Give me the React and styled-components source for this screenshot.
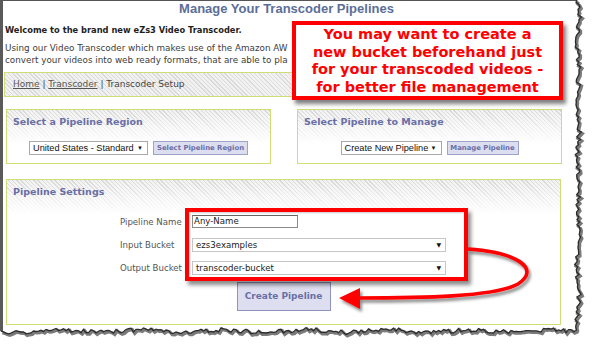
import React from 'react'
import styled, { createGlobalStyle } from 'styled-components'

const GlobalStyle = createGlobalStyle`
  html, body {
    margin: 0;
    padding: 0;
    background: #fff;
  }
  body {
    font-family: "DejaVu Sans", Verdana, sans-serif;
  }
`

// simple seeded noise so the torn edge is the same every render
function makeRand(seed) {
  let s = seed
  return () => {
    s = (s * 16807) % 2147483647
    return (s - 1) / 2147483646
  }
}

function tornEdgePath() {
  const rand = makeRand(42)
  const pts = []
  for (let y = 2; y <= 330; y += 2.5) {
    const x = 578 + Math.sin(y / 9) * 1.2 + (rand() - 0.5) * 4.5
    pts.push([x, y])
  }
  for (let x = 576; x >= 0; x -= 2.5) {
    const y = 331 + Math.sin(x / 13) * 1.3 + (rand() - 0.5) * 4.5
    pts.push([x, y])
  }
  return 'M577 0 ' + pts.map(p => `L${p[0].toFixed(1)} ${p[1].toFixed(1)}`).join(' ')
}

const edge = tornEdgePath()

function App() {
  return (
    <Page>
      <GlobalStyle />
      <Paper>
        <Title>Manage Your Transcoder Pipelines</Title>
        <Welcome>Welcome to the brand new eZs3 Video Transcoder.</Welcome>
        {/* only the part left of the callout is visible in the screenshot */}
        <Intro>
          <div>Using our Video Transcoder which makes use of the Amazon AW</div>
          <div>convert your videos into web ready formats, that are able to pla</div>
        </Intro>
        <Crumbs>
          <a href='#'>Home</a> | <a href='#'>Transcoder</a> | Transcoder Setup
        </Crumbs>
        <Row>
          <Box>
            <BoxTitle>Select a Pipeline Region</BoxTitle>
            <Controls>
              <FakeSelect width={119}>United States - Standard<Caret>▼</Caret></FakeSelect>
              <SmallButton width={95}>Select Pipeline Region</SmallButton>
            </Controls>
          </Box>
          <Box>
            <BoxTitle>Select Pipeline to Manage</BoxTitle>
            <Controls>
              <FakeSelect width={101}>Create New Pipeline<Caret>▼</Caret></FakeSelect>
              <SmallButton width={72}>Manage Pipeline</SmallButton>
            </Controls>
          </Box>
        </Row>
        <Settings>
          <BoxTitle>Pipeline Settings</BoxTitle>
          <Form>
            <Label>Pipeline Name</Label>
            <TextInput>Any-Name</TextInput>
            <Label>Input Bucket</Label>
            <BucketSelect>ezs3examples<Caret>▼</Caret></BucketSelect>
            <Label>Output Bucket</Label>
            <BucketSelect>transcoder-bucket<Caret>▼</Caret></BucketSelect>
          </Form>
          <BigButton>Create Pipeline</BigButton>
        </Settings>
      </Paper>

      <Callout>
        You may want to create a<br />
        new bucket beforehand just<br />
        for your transcoded videos -<br />
        for better file management
      </Callout>
      <RedFrame />

      <Overlay width='600' height='351' viewBox='0 0 600 351'>
        <defs>
          <filter id='sh' x='-10%' y='-10%' width='130%' height='130%'>
            <feDropShadow dx='2' dy='3' stdDeviation='1.6' floodColor='#000' floodOpacity='0.45' />
          </filter>
        </defs>
        <g filter='url(#sh)'>
          <path d='M468 249 C 515 252, 542 268, 518 284 C 495 297, 420 298, 357 298'
            fill='none' stroke='#f00' strokeWidth='3.6' />
          <polygon points='339,298 360,288 360,309' fill='#f00' />
        </g>
        <path d={edge + ' L0 331 L0 351 L600 351 L600 0 Z'} fill='#fff' />
        <path d={edge} fill='none' stroke='#7a7a7a' strokeWidth='3.2' transform='translate(1.3 1.5)' />
        <path d={edge} fill='none' stroke='#2b2b2b' strokeWidth='1.3' />
      </Overlay>
    </Page>
  )
}

export default App

const Page = styled.div`
    position: relative;
    width: 600px;
    height: 351px;
    overflow: hidden;
    background: #fff;
`

const Paper = styled.div`
    width: 578px;
    height: 333px;
    box-sizing: border-box;
    border-left: 3px solid #5a5a5a;
    border-top: 1px solid #555;
    background: #fff;
    overflow: hidden;
`

const Title = styled.div`
    font-family: "Liberation Sans", Arial, sans-serif;
    font-weight: bold;
    font-size: 13px;
    line-height: 15px;
    color: #5b6e98;
    text-align: center;
    padding-right: 8px;
`

const Welcome = styled.div`
    margin-top: 8px;
    padding-left: 2px;
    font-weight: bold;
    font-size: 8.3px;
    line-height: 12px;
    color: #1e1e1e;
`

const Intro = styled.div`
    margin-top: 6px;
    padding-left: 2px;
    font-size: 8.8px;
    line-height: 12px;
    color: #3c3c3c;
    white-space: nowrap;
`

const hatch = `
    background:
        linear-gradient(180deg, rgba(255,255,255,0) 0px, rgba(255,255,255,0.6) 18px, #fff 34px),
        repeating-linear-gradient(45deg, #d6d6d6 0 1px, #f2f2f2 1px 3px);
`

const Crumbs = styled.div`
    margin: 6px 0 0 1px;
    width: 557px;
    height: 25px;
    box-sizing: border-box;
    border: 1px solid #cfdc78;
    background:
        linear-gradient(90deg, rgba(255,255,255,0) 40%, rgba(255,255,255,0.5) 100%),
        repeating-linear-gradient(45deg, #dadada 0 1px, #f1f1f1 1px 3px);
    padding-left: 8px;
    font-size: 9px;
    line-height: 23px;
    color: #444;

    a {
        color: #555;
        text-decoration: underline;
    }
`

const Row = styled.div`
    display: flex;
    gap: 26px;
    margin: 12px 0 0 3px;
`

const Box = styled.div`
    width: 265px;
    height: 55px;
    box-sizing: border-box;
    border: 1px solid #cfdc78;
    ${hatch}
    padding: 6px 0 0 6px;
`

const BoxTitle = styled.div`
    font-weight: bold;
    font-size: 9.5px;
    line-height: 12px;
    color: #6a6fa6;
`

const Controls = styled.div`
    display: flex;
    justify-content: center;
    gap: 5px;
    margin-top: 13px;
    padding-right: 6px;
`

const FakeSelect = styled.div`
    position: relative;
    width: ${props => props.width}px;
    height: 14px;
    box-sizing: border-box;
    border: 1px solid #a9a9a9;
    background: #fff;
    font-family: "Liberation Sans", Arial, sans-serif;
    font-size: 9.2px;
    line-height: 12px;
    padding-left: 3px;
    color: #111;
    white-space: nowrap;
`

const Caret = styled.span`
    position: absolute;
    right: 4px;
    top: 0;
    font-size: 6px;
    line-height: 12px;
    color: #111;
`

const SmallButton = styled.div`
    width: ${props => props.width}px;
    height: 14px;
    box-sizing: border-box;
    border: 1px solid #9ea3c9;
    background: #dcdef0;
    font-weight: bold;
    font-size: 6.9px;
    line-height: 12px;
    text-align: center;
    color: #6a6fa6;
    white-space: nowrap;
`

const Settings = styled.div`
    margin: 15px 0 0 3px;
    width: 555px;
    height: 146px;
    box-sizing: border-box;
    border: 1px solid #cfdc78;
    ${hatch}
    padding: 6px 0 0 6px;
`

const Form = styled.div`
    display: grid;
    grid-template-columns: 72px 254px;
    grid-auto-rows: 14px;
    row-gap: 9px;
    margin: 17px 0 0 107px;
`

const Label = styled.div`
    font-size: 8.6px;
    line-height: 14px;
    color: #555;
    white-space: nowrap;
`

const TextInput = styled.div`
    width: 106px;
    height: 13px;
    box-sizing: border-box;
    border: 1px solid #8a8a8a;
    border-top-color: #666;
    background: #fff;
    font-size: 8.6px;
    line-height: 11px;
    padding-left: 1px;
    color: #222;
`

const BucketSelect = styled.div`
    position: relative;
    height: 14px;
    box-sizing: border-box;
    border: 1px solid #c6c6c6;
    background: #fff;
    font-size: 8.6px;
    line-height: 12px;
    padding-left: 3px;
    color: #222;
`

const BigButton = styled.div`
    width: 94px;
    height: 29px;
    box-sizing: border-box;
    margin: 7px auto 0;
    position: relative;
    left: -3px;
    border: 1px solid #8e93bb;
    background: #dddff0;
    font-weight: bold;
    font-size: 9px;
    line-height: 27px;
    text-align: center;
    color: #6a6fa6;
`

// annotations drawn over the screenshot
const Callout = styled.div`
    position: absolute;
    left: 292px;
    top: 21px;
    width: 271px;
    height: 79px;
    box-sizing: border-box;
    border: 4px solid #f00;
    background: #fff;
    box-shadow: 3px 4px 4px rgba(0, 0, 0, .5);
    padding-top: 1px;
    font-weight: bold;
    font-size: 14.5px;
    line-height: 17.5px;
    text-align: center;
    color: #f00;
    white-space: nowrap;
`

const RedFrame = styled.div`
    position: absolute;
    left: 185px;
    top: 208px;
    width: 283px;
    height: 73px;
    box-sizing: border-box;
    border: 4px solid #f00;
    box-shadow: 3px 4px 4px rgba(0, 0, 0, .45), inset 1px 1px 2px rgba(0,0,0,.2);
`

const Overlay = styled.svg`
    position: absolute;
    left: 0;
    top: 0;
    pointer-events: none;
`
